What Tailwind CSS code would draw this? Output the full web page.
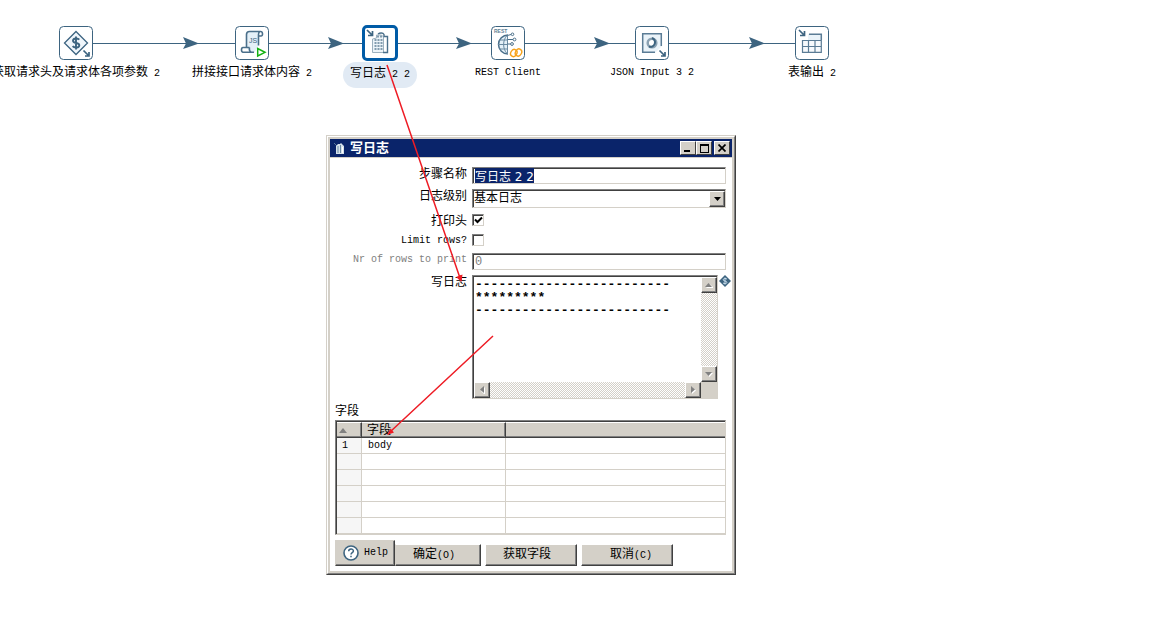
<!DOCTYPE html>
<html lang="zh-CN">
<head>
<meta charset="utf-8">
<title>写日志</title>
<script src="https://cdn.jsdelivr.net/npm/@tailwindcss/browser@4"></script>
</head>
<body class="relative min-h-screen overflow-hidden bg-white font-['Liberation_Mono','Noto_Sans_CJK_SC',monospace] text-[12px] leading-4 text-black">

<!-- Transformation canvas: hops -->
<svg class="absolute left-0 top-0" width="860" height="60" aria-hidden="true">
  <path d="M93 43.500H235M269 43.500H362M398 43.500H491M525 43.500H635M669 43.500H795" stroke="#3d6480" fill="none"/>
  <g fill="#3d6480">
    <path d="M183 37l16 6.500-16 5.500 3-5.500z"/><path d="M328 37l16 6.500-16 5.500 3-5.500z"/><path d="M456 37l16 6.500-16 5.500 3-5.500z"/><path d="M594 37l16 6.500-16 5.500 3-5.500z"/><path d="M749 37l16 6.500-16 5.500 3-5.500z"/>
  </g>
</svg>

<!-- Steps -->
<div class="absolute left-[76px] top-[26px] flex w-[200px] -translate-x-1/2 flex-col items-center gap-[5px]">
  <svg width="34" height="34" viewBox="0 0 34 34" fill="none" stroke="#3d6480" aria-hidden="true">
    <rect x=".5" y=".5" width="33" height="33" rx="4" fill="#fff"/>
    <path d="M17 5.500L28.500 17 17 28.500 5.500 17z" fill="#f0f6fb" stroke-width="1.300"/>
    <path d="M20.300 13.700c-1.500-1.800-6.300-1.600-6.300 1 0 3 6.300 1.600 6.300 4.500 0 2.800-5 2.900-6.700.9M17 10.500v13" stroke-width="1.900"/>
    <path d="M24.500 24.500l5 5M30 26v4h-4" stroke-width="1.700"/>
  </svg>
  <span class="whitespace-nowrap">获取请求头及请求体各项参数<span class="text-[10px]"> 2</span></span>
</div>
<div class="absolute left-[252px] top-[26px] flex w-[160px] -translate-x-1/2 flex-col items-center gap-[5px]">
  <svg width="34" height="34" viewBox="0 0 34 34" fill="none" stroke="#3d6480" aria-hidden="true">
    <rect x=".5" y=".5" width="33" height="33" rx="4" fill="#fff"/>
    <path d="M11.500 6H23v15l-4 6h-4l-3-5z" fill="#e4f0f8" stroke="none"/>
    <path d="M11.500 21V8.500c0-2 1-3 3-3h11c2.600 0 2.600 4.500.5 4.500h-2.500M25 5.500c-1.700.5-1.500 2-1.500 3.500v10.500M14.500 21.500H8c-2 0-2 4.700 0 4.700h8M14.500 21.500c-.3 2 0 4.700 2 4.700h2.500" stroke="#4a6f8a" stroke-width="1.600"/>
    <text x="14" y="17" font-family="Liberation Sans" font-size="7" fill="#3d6480" stroke="none">JS</text>
    <path d="M22.700 22.500v7.500l7.300-3.700z" fill="#fff" stroke="#12b212" stroke-width="1.500"/>
  </svg>
  <span class="whitespace-nowrap">拼接接口请求体内容<span class="text-[10px]"> 2</span></span>
</div>
<div class="absolute left-[380px] top-[25px] flex w-[90px] -translate-x-1/2 flex-col items-center gap-[1px]">
  <svg width="36" height="36" viewBox="0 0 36 36" fill="none" stroke="#3d6480" aria-hidden="true">
    <rect x="1.500" y="1.500" width="33" height="33" rx="3.500" fill="#fff" stroke="#005ba6" stroke-width="3"/>
    <path d="M5 5l5 5M10.500 6v4.500H6" stroke-width="1.700"/>
    <path d="M10.500 14v13.500h11V12l-2-2h-5v3z" fill="#edf4f9" stroke="#9db1bf"/>
    <path d="M15 11.500h2m1 0h2M12.500 15h2m1 0h2m1 0h2M12.500 18h2m1 0h2m1 0h2M12.500 21h2m1 0h2m1 0h2M12.500 24h2m1 0h2m1 0h2" stroke="#839cae" stroke-width="1.900"/>
    <path d="M16 9c2-1.500 5-1.500 6 .5v2h3.500v16H21" stroke="#4a6f8a" stroke-width="1.400"/>
  </svg>
  <span class="whitespace-nowrap rounded-full bg-[#e1eaf4] px-[7px] pb-[5px] pt-1">写日志<span class="text-[10px]"> 2 2</span></span>
</div>
<div class="absolute left-[508px] top-[26px] flex w-[120px] -translate-x-1/2 flex-col items-center gap-[5px]">
  <svg width="34" height="34" viewBox="0 0 34 34" fill="none" stroke="#3d6480" aria-hidden="true">
    <rect x=".5" y=".5" width="33" height="33" rx="4" fill="#fff"/>
    <text x="3" y="7" font-family="Liberation Sans" font-weight="bold" font-size="5" fill="#5f7f96" stroke="none">REST</text>
    <path d="M16.500 9a9.500 9.500 0 0 0 0 19z" fill="#e4f0f8" stroke="none"/>
    <path d="M17 9A9.500 9.500 0 0 0 17 28" stroke="#4a6f8a" stroke-width="1.500"/>
    <path d="M16.500 9v19M16 9.500c-4.500 4.500-4.500 13.500 0 18M8.500 14H16M7 18.500h9M8.500 23H16" stroke="#6a8aa1"/>
    <path d="M16.500 9.500l3.500-1M16.500 13.500h5.500M16.500 18h3" stroke="#4a6f8a"/>
    <g fill="#fff" stroke="#4a6f8a"><circle cx="21.500" cy="8.300" r="1.300"/><circle cx="23.500" cy="13.500" r="1.400"/><circle cx="21" cy="18" r="1.400"/></g>
    <g stroke="#f6a21b" stroke-width="1.400"><ellipse cx="22.800" cy="27" rx="3" ry="3.700" transform="rotate(30 22.800 27)"/><ellipse cx="27.500" cy="26.500" rx="3" ry="3.700" transform="rotate(30 27.500 26.500)"/></g>
  </svg>
  <span class="whitespace-nowrap text-[10px]">REST Client</span>
</div>
<div class="absolute left-[652px] top-[26px] flex w-[120px] -translate-x-1/2 flex-col items-center gap-[5px]">
  <svg width="34" height="34" viewBox="0 0 34 34" fill="none" stroke="#3d6480" aria-hidden="true">
    <rect x=".5" y=".5" width="33" height="33" rx="4" fill="#fff"/>
    <path d="M7 7h20v13l-7 7H7z" fill="#eaf3f9" stroke="none"/>
    <path d="M26.300 20V7.700H7.700v18.600H20" stroke="#5b7c95" stroke-width="1.500"/>
    <circle cx="17" cy="17" r="4.300" fill="#fff" stroke="#8ba2b3" stroke-width="2.500"/>
    <path d="M17 12a4.500 4.500 0 1 1-3 8.500" stroke="#3d6480" stroke-width="2"/>
    <path d="M24.500 24.500l5 5M30 26v4h-4" stroke-width="1.700"/>
  </svg>
  <span class="whitespace-nowrap text-[10px]">JSON Input 3 2</span>
</div>
<div class="absolute left-[812px] top-[26px] flex w-[90px] -translate-x-1/2 flex-col items-center gap-[5px]">
  <svg width="34" height="34" viewBox="0 0 34 34" fill="none" stroke="#3d6480" aria-hidden="true">
    <rect x=".5" y=".5" width="33" height="33" rx="4" fill="#fff"/>
    <path d="M4 4l5 5M9.500 5v4.500H5" stroke-width="1.700"/>
    <path d="M13 8h13v6h-13z" fill="#eaf3f9" stroke="none"/>
    <path d="M14 8.300h12.300V14" stroke="#5b7c95" stroke-width="1.500"/>
    <path d="M7.500 14.500h18.800v11.800H7.500zM7.500 20.500H26M13.500 14.500v12M20 14.500v12" fill="#f7fafc" stroke="#5b7c95" stroke-width="1.200"/>
  </svg>
  <span class="whitespace-nowrap">表输出<span class="text-[10px]"> 2</span></span>
</div>

<!-- Dialog window -->
<section role="dialog" aria-labelledby="dlg-title" class="absolute left-[326px] top-[135px] w-[410px] border border-b-[#404040] border-l-[#d4d0c8] border-r-[#404040] border-t-[#d4d0c8]">
<div class="border border-b-[#808080] border-l-white border-r-[#808080] border-t-white bg-[#d4d0c8] p-[2px]">
  <header class="flex h-[18px] items-center bg-[#0a246a] pl-1 pr-[2px]">
    <svg width="12" height="13" viewBox="0 0 12 13" aria-hidden="true"><path d="M0 1l3 3" stroke="#58769b"/><path d="M2 4l2-2h2l1-1 3 3v8H2z" fill="#d5e1ea"/><path d="M4 4v7M6.500 3v8" stroke="#6b8aa5"/><path d="M8.500 5v6" stroke="#fff"/></svg>
    <h1 id="dlg-title" class="ml-1 flex-1 pt-[2px] text-[13px] font-bold text-white">写日志</h1>
    <button aria-label="最小化" class="flex h-[14px] w-4 items-end border border-b-[#404040] border-l-white border-r-[#404040] border-t-white bg-[#d4d0c8] pb-[2px] pl-[3px]"><span class="h-[2px] w-[6px] bg-black"></span></button>
    <button aria-label="最大化" class="flex h-[14px] w-4 items-center justify-center border border-b-[#404040] border-l-white border-r-[#404040] border-t-white bg-[#d4d0c8]"><span class="h-[9px] w-[9px] border border-t-2 border-black"></span></button>
    <button aria-label="关闭" class="ml-[2px] flex h-[14px] w-4 items-center justify-center border border-b-[#404040] border-l-white border-r-[#404040] border-t-white bg-[#d4d0c8]"><svg width="8" height="8" viewBox="0 0 8 8"><path d="M.5.500l7 7M7.500.500l-7 7" stroke="#000" stroke-width="1.700"/></svg></button>
  </header>

  <form class="mt-px bg-white pb-[5px] pr-[6px] pt-[9px]">
    <div class="grid grid-cols-[137px_1fr] grid-rows-[22px_25px_20px_19px_22px_auto] items-start gap-x-[5px]">
      <label for="step" class="text-right">步骤名称</label>
      <input id="step" value="写日志 2 2" class="h-[17px] w-full border border-b-[#d4d0c8] border-l-[#808080] border-r-[#d4d0c8] border-t-[#808080] bg-white px-[2px] font-['DejaVu_Sans','Noto_Sans_CJK_SC',sans-serif] text-[12px] leading-[14px] shadow-[inset_1px_1px_0_#404040] outline-none selection:bg-[#0a246a] selection:text-white">
      <label for="level" class="text-right">日志级别</label>
      <div class="relative h-[19px]">
        <select id="level" class="block h-[19px] w-full appearance-none border border-b-[#d4d0c8] border-l-[#808080] border-r-[#d4d0c8] border-t-[#808080] bg-white px-px pt-px text-[12px] leading-4 shadow-[inset_1px_1px_0_#404040] outline-none"><option>基本日志</option></select>
        <span class="pointer-events-none absolute right-[1px] top-[2px] flex h-4 w-4 items-center justify-center border border-b-[#404040] border-l-white border-r-[#404040] border-t-white bg-[#d4d0c8] shadow-[inset_-1px_-1px_0_#808080]"><svg width="7" height="4"><path d="M0 0h7L3.500 4z"/></svg></span>
      </div>
      <label for="header" class="text-right">打印头</label>
      <input id="header" type="checkbox" checked class="h-3 w-3 appearance-none border border-b-[#d4d0c8] border-l-[#808080] border-r-[#d4d0c8] border-t-[#808080] bg-white shadow-[inset_1px_1px_0_#404040] checked:bg-[url('data:image/svg+xml,%3Csvg%20xmlns=%22http://www.w3.org/2000/svg%22%20viewBox=%220%200%2010%2010%22%3E%3Cpath%20d=%22M2%204.500l2.500%202.500L9%202.500%22%20fill=%22none%22%20stroke=%22black%22%20stroke-width=%222%22/%3E%3C/svg%3E')]">
      <label for="limit" class="-mt-px text-right text-[10px]">Limit rows?</label>
      <input id="limit" type="checkbox" class="h-3 w-3 appearance-none border border-b-[#d4d0c8] border-l-[#808080] border-r-[#d4d0c8] border-t-[#808080] bg-white shadow-[inset_1px_1px_0_#404040]">
      <label for="nr" class="-mt-px text-right text-[10px] text-[#808080]">Nr of rows to print</label>
      <input id="nr" value="0" disabled class="h-[17px] w-full border border-b-[#d4d0c8] border-l-[#808080] border-r-[#d4d0c8] border-t-[#808080] bg-white px-[2px] text-[12px] leading-[14px] text-[#808080] shadow-[inset_1px_1px_0_#404040]">
      <label for="log" class="text-right">写日志</label>
      <div class="flex items-start gap-px">
        <div class="grid flex-1 grid-cols-[1fr_16px] grid-rows-[105px_16px] border border-b-[#d4d0c8] border-l-[#808080] border-r-[#d4d0c8] border-t-[#808080] bg-[#404040] pl-px pt-px">
          <textarea id="log" wrap="off" class="block resize-none overflow-hidden bg-white pl-px pt-px text-[13px] font-bold leading-[13px] outline-none">-------------------------
*********
-------------------------</textarea>
          <div class="flex flex-col justify-between bg-[repeating-conic-gradient(#d4d0c8_0_25%,#fff_0_50%)] bg-size-[2px_2px]">
            <button type="button" aria-label="向上滚动" class="flex h-4 w-4 items-center justify-center border border-b-[#404040] border-l-white border-r-[#404040] border-t-white bg-[#d4d0c8] shadow-[inset_-1px_-1px_0_#808080]"><svg width="8" height="5"><path d="M1 5h7V4L4.500 1z" fill="#fff"/><path d="M0 4h7L3.500 0z" fill="#808080"/></svg></button>
            <button type="button" aria-label="向下滚动" class="flex h-4 w-4 items-center justify-center border border-b-[#404040] border-l-white border-r-[#404040] border-t-white bg-[#d4d0c8] shadow-[inset_-1px_-1px_0_#808080]"><svg width="8" height="5"><path d="M1 1h7L4.500 5z" fill="#fff"/><path d="M0 0h7L3.500 4z" fill="#808080"/></svg></button>
          </div>
          <div class="flex justify-between bg-[repeating-conic-gradient(#d4d0c8_0_25%,#fff_0_50%)] bg-size-[2px_2px]">
            <button type="button" aria-label="向左滚动" class="flex h-4 w-4 items-center justify-center border border-b-[#404040] border-l-white border-r-[#404040] border-t-white bg-[#d4d0c8] shadow-[inset_-1px_-1px_0_#808080]"><svg width="5" height="8"><path d="M5 1v7H4L1 5z" fill="#fff"/><path d="M4 0v7L0 3.500z" fill="#808080"/></svg></button>
            <button type="button" aria-label="向右滚动" class="flex h-4 w-4 items-center justify-center border border-b-[#404040] border-l-white border-r-[#404040] border-t-white bg-[#d4d0c8] shadow-[inset_-1px_-1px_0_#808080]"><svg width="5" height="8"><path d="M1 1v7l4-3.500z" fill="#fff"/><path d="M0 0v7l4-3.500z" fill="#808080"/></svg></button>
          </div>
          <div class="bg-[#d4d0c8]"></div>
        </div>
        <svg class="-mr-[5px]" width="12" height="12" viewBox="0 0 12 12" aria-hidden="true"><path d="M6 0l6 6-6 6-6-6z" fill="#3d6480"/><path d="M8 4.200C7 3 4.200 3.200 4.200 4.800c0 1.700 3.700.8 3.700 2.500S5 9 4 7.900M6 2.500v7" fill="none" stroke="#c8dceb"/></svg>
      </div>
    </div>

    <div class="pl-[5px]">
      <h2 class="mt-[5px] leading-4">字段</h2>
      <div class="border border-b-[#d4d0c8] border-l-[#808080] border-r-[#d4d0c8] border-t-[#808080]">
      <div class="border-l border-t border-[#404040]">
      <table class="w-full table-fixed border-separate border-spacing-0 text-left text-[10px]">
        <colgroup><col class="w-[25px]"><col class="w-[144px]"><col></colgroup>
        <thead><tr class="h-4 bg-[#d4d0c8]">
          <th scope="col" aria-label="#" class="h-4 border-b border-r border-t border-b-[#404040] border-r-[#404040] border-t-white p-0 pl-[2px] shadow-[inset_-1px_-1px_0_#808080]"><svg width="8" height="5"><path d="M0 5h8L4 0z" fill="#808080"/></svg></th>
          <th scope="col" class="h-4 border-b border-r border-t border-b-[#404040] border-r-[#404040] border-t-white p-0 pl-[5px] pt-[2px] text-[12px] font-normal leading-3 shadow-[inset_-1px_-1px_0_#808080]">字段</th>
          <th scope="col" aria-label="空" class="h-4 border-b border-t border-b-[#404040] border-t-white p-0 shadow-[inset_0_-1px_0_#808080]"></th>
        </tr></thead>
        <tbody class="leading-[15px] [&_td]:h-4 [&_td]:border-b [&_td]:border-r [&_td]:border-[#d4d0c8] [&_td]:p-0 [&_td:first-child]:bg-[#f6f6f6] [&_td:last-child]:border-r-0">
          <tr><td><span class="pl-[5px]">1</span></td><td><span class="pl-[6px]">body</span></td><td></td></tr>
          <tr><td></td><td></td><td></td></tr>
          <tr><td></td><td></td><td></td></tr>
          <tr><td></td><td></td><td></td></tr>
          <tr><td></td><td></td><td></td></tr>
          <tr><td></td><td></td><td></td></tr>
        </tbody>
      </table>
      </div></div>
      <div class="mt-[5px] flex items-end">
        <button type="button" class="flex h-[26px] w-[60px] items-center gap-[5px] border border-b-[#404040] border-l-[#d4d0c8] border-r-[#404040] border-t-[#d4d0c8] bg-[#d4d0c8] pl-[7px] text-[10px] shadow-[inset_-1px_-1px_0_#808080]"><svg width="16" height="16" viewBox="0 0 16 16" fill="none" aria-hidden="true"><circle cx="8" cy="8" r="7" fill="#fff" stroke="#3d6480" stroke-width="1.600"/><path d="M5.700 6.200c0-3 4.700-2.900 4.700-.2 0 1.700-2.400 1.700-2.400 3.500M8 10.700v1.600" stroke="#3d6480" stroke-width="1.500"/></svg>Help</button>
        <button type="button" class="h-[22px] w-[86px] border border-b-[#404040] border-l-[#d4d0c8] border-r-[#404040] border-t-white bg-[#d4d0c8] pr-2 shadow-[inset_-1px_-1px_0_#808080]">确定<span class="text-[10px]">(O)</span></button>
        <button type="button" class="ml-1 h-[22px] w-[92px] border border-b-[#404040] border-l-white border-r-[#404040] border-t-white bg-[#d4d0c8] pr-2 shadow-[inset_-1px_-1px_0_#808080]">获取字段</button>
        <button type="button" class="ml-1 h-[22px] w-[92px] border border-b-[#404040] border-l-white border-r-[#404040] border-t-white bg-[#d4d0c8] pl-2 shadow-[inset_-1px_-1px_0_#808080]">取消<span class="text-[10px]">(C)</span></button>
      </div>
    </div>
  </form>
</div>
</section>

<!-- Annotation arrows -->
<svg class="pointer-events-none absolute left-0 top-0" width="740" height="580" fill="none" stroke="#ee1c25" stroke-width="1.500" aria-hidden="true">
  <path d="M387 65L460 278M493 336L390 432"/>
  <path d="M461.500 282l-5.500-5 6.500-2.500zM387 435l3.500-6.500 3.500 4z" fill="#ee1c25" stroke="none"/>
</svg>
<script>
  const step = document.getElementById('step');
  step.focus();
  step.select();
</script>
</body>
</html>
